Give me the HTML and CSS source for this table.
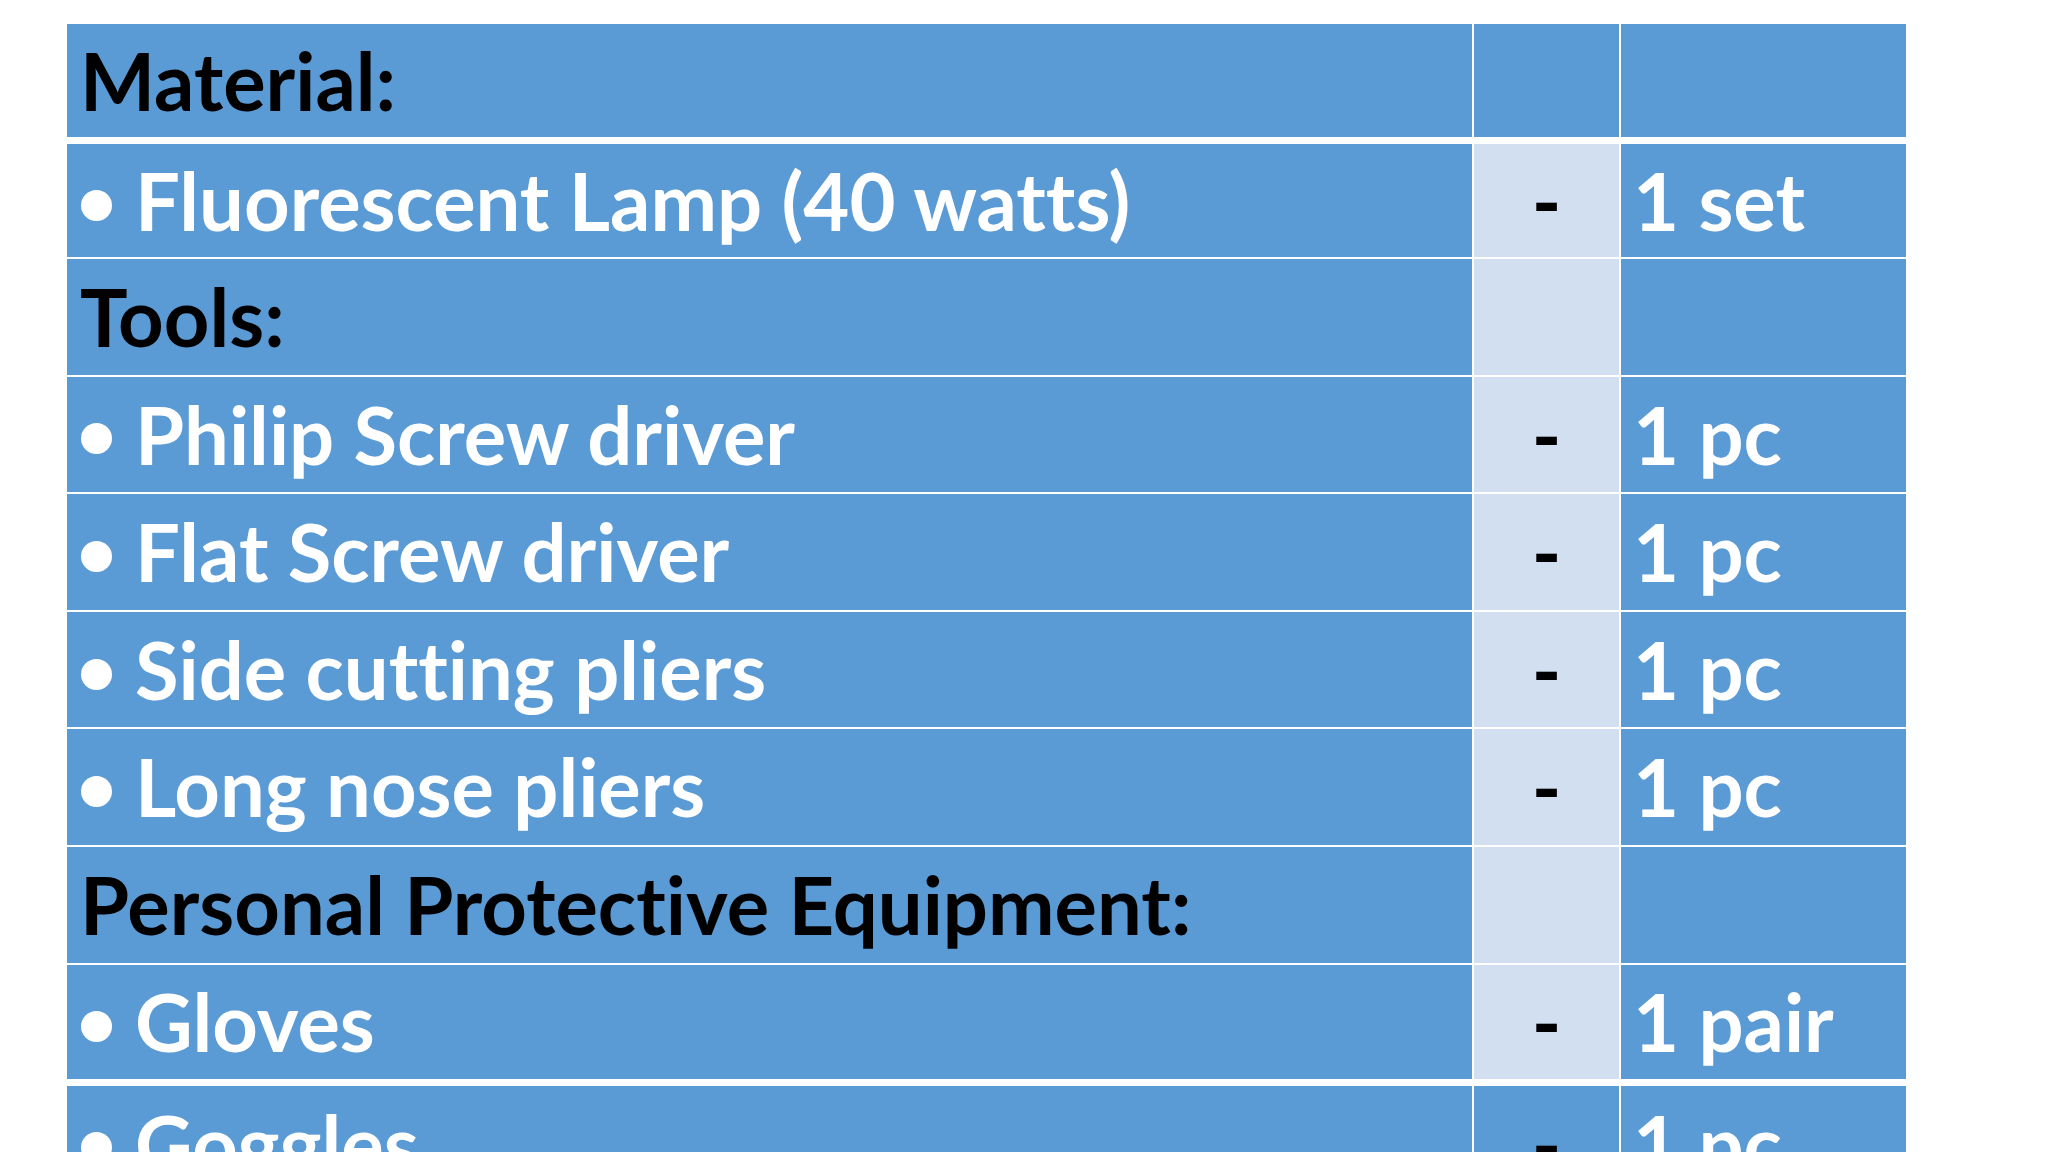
FILE: index.html
```html
<!DOCTYPE html>
<html>
<head>
<meta charset="utf-8">
<link rel="stylesheet" href="styles.css">
</head>
<body>
<div class="page">
  <div class="table">
    <div class="row r-first sep-thick">
      <div class="cell c1 head">Material:</div>
      <div class="cell c2 dark"></div>
      <div class="cell c3"></div>
    </div>
    <div class="row r-short">
      <div class="cell c1 item"><span class="bullet"></span>Fluorescent Lamp (40 watts)</div>
      <div class="cell c2"><span class="dash">-</span></div>
      <div class="cell c3 qty">1 set</div>
    </div>
    <div class="row">
      <div class="cell c1 head">Tools:</div>
      <div class="cell c2"></div>
      <div class="cell c3"></div>
    </div>
    <div class="row">
      <div class="cell c1 item"><span class="bullet"></span>Philip Screw driver</div>
      <div class="cell c2"><span class="dash">-</span></div>
      <div class="cell c3 qty">1 pc</div>
    </div>
    <div class="row">
      <div class="cell c1 item"><span class="bullet"></span>Flat Screw driver</div>
      <div class="cell c2"><span class="dash">-</span></div>
      <div class="cell c3 qty">1 pc</div>
    </div>
    <div class="row">
      <div class="cell c1 item"><span class="bullet"></span>Side cutting pliers</div>
      <div class="cell c2"><span class="dash">-</span></div>
      <div class="cell c3 qty">1 pc</div>
    </div>
    <div class="row">
      <div class="cell c1 item"><span class="bullet"></span>Long nose pliers</div>
      <div class="cell c2"><span class="dash">-</span></div>
      <div class="cell c3 qty">1 pc</div>
    </div>
    <div class="row">
      <div class="cell c1 head">Personal Protective Equipment:</div>
      <div class="cell c2"></div>
      <div class="cell c3"></div>
    </div>
    <div class="row r-gloves sep-thick">
      <div class="cell c1 item"><span class="bullet"></span>Gloves</div>
      <div class="cell c2"><span class="dash">-</span></div>
      <div class="cell c3 qty">1 pair</div>
    </div>
    <div class="row">
      <div class="cell c1 item"><span class="bullet"></span>Goggles</div>
      <div class="cell c2 dark"><span class="dash">-</span></div>
      <div class="cell c3 qty">1 pc</div>
    </div>
  </div>
</div>
</body>
</html>
```

FILE: styles.css
```css
html, body {
  margin: 0;
  padding: 0;
  background: #ffffff;
  overflow: hidden;
}

.page {
  width: 2048px;
  height: 1152px;
  padding: 24px 0 0 67px;
  box-sizing: border-box;
  overflow: hidden;
}

.table {
  display: flex;
  flex-direction: column;
  gap: 2px;
  width: 1839px;
}

.row {
  display: grid;
  grid-template-columns: 1405px 145px 285px;
  column-gap: 2px;
  height: 115.6px;
}

.row.r-first,
.row.r-short {
  height: 113px;
}

.row.r-gloves {
  height: 114px;
}

.row.sep-thick {
  margin-bottom: 5px;
}

.cell {
  background: #5b9bd5;
  font-family: "Lato", "Liberation Sans", sans-serif;
  font-weight: 700;
  font-size: 79.5px;
  line-height: 1;
  font-variant-ligatures: none;
  display: flex;
  align-items: center;
  white-space: nowrap;
}

.c1 {
  padding-left: 13px;
}

.c2 {
  background: #d1dff0;
  justify-content: center;
}

.c2.dark {
  background: #5b9bd5;
}

.c3 {
  padding-left: 12px;
}

.head {
  color: #000000;
}

.item,
.qty {
  color: #ffffff;
}

.bullet {
  display: inline-block;
  flex: none;
  width: 31px;
  height: 31px;
  border-radius: 50%;
  background: #ffffff;
  margin-left: 1px;
  margin-right: 23px;
  margin-top: 9px;
}

.dash {
  color: #000000;
}
```
